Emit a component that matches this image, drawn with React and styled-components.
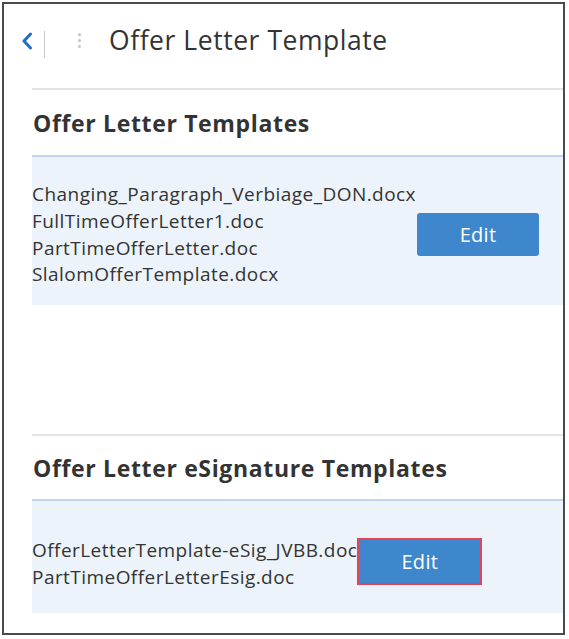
import React from "react";
import styled, { createGlobalStyle } from "styled-components";

const Global = createGlobalStyle`
  html, body { margin: 0; padding: 0; background: #fff; }
  body { font-family: "Open Sans", "Liberation Sans", sans-serif; color: #333; }
  * { box-sizing: border-box; }
`;

const Frame = styled.div`
  margin: 2px;
  width: 563px;
  height: 633px;
  border: 2px solid #4a4a4a;
  background: #fff;
  display: flex;
  flex-direction: column;
  overflow: hidden;
`;

const Header = styled.div`
  height: 76px;
  display: flex;
  align-items: center;
  padding-left: 16px;
`;

const BackButton = styled.button`
  border: none;
  background: none;
  padding: 0;
  width: 14px;
  height: 20px;
  display: flex;
  align-items: center;
  justify-content: center;
  cursor: pointer;
  margin-top: -3px;
`;

const VDivider = styled.span`
  width: 1px;
  height: 27px;
  background: #c9c9c9;
  margin-left: 10px;
  margin-top: 5px;
`;

const Dots = styled.span`
  display: flex;
  flex-direction: column;
  gap: 3px;
  margin-left: 33px;
  margin-top: -3px;
  span {
    width: 3px;
    height: 3px;
    border-radius: 50%;
    background: #c4c4c4;
  }
`;

const Title = styled.h1`
  margin: -4px 0 0 28px;
  font-size: 26.5px;
  font-weight: 400;
  color: #333;
  letter-spacing: 0.55px;
`;

const Content = styled.div`
  padding-left: 28px;
  margin-top: 8px;
`;

const Section = styled.section`
  border-top: 2px solid #e4e4e4;
  margin-top: ${(p) => p.$gap || 0}px;
`;

const SectionTitle = styled.h2`
  margin: 0;
  height: ${(p) => p.$h}px;
  display: flex;
  align-items: center;
  font-size: 23px;
  font-weight: 700;
  letter-spacing: 0.65px;
  color: #333;
  padding-left: 1px;
`;

const Panel = styled.div`
  border-top: 2px solid #bcd6ef;
  background: #edf3fa;
  height: ${(p) => p.$h}px;
  padding-top: ${(p) => p.$pt}px;
  display: flex;
  align-items: flex-start;
`;

const Row = styled.div`
  display: flex;
  align-items: center;
  gap: 1px;
`;

const FileList = styled.div`
  font-size: 19px;
  letter-spacing: 0.45px;
  line-height: 26.8px;
  color: #333;
  white-space: nowrap;
`;

const EditButton = styled.button`
  font-family: "Open Sans", "Liberation Sans", sans-serif;
  font-size: 20px;
  letter-spacing: 0.3px;
  color: #fff;
  background: #3f87cc;
  border: ${(p) => (p.$focused ? "2px solid #e3445c" : "none")};
  border-radius: ${(p) => (p.$focused ? "0" : "3px")};
  width: ${(p) => (p.$focused ? 125 : 122)}px;
  height: ${(p) => (p.$focused ? 47 : 43)}px;
  padding: 0;
  cursor: pointer;
  margin-bottom: ${(p) => (p.$focused ? 4 : 0)}px;
  margin-left: ${(p) => (p.$focused ? -1 : 0)}px;
`;

const ChevronLeft = () => (
  <svg width="12" height="18" viewBox="0 0 12 18">
    <path d="M9.5 2 L3 9 L9.5 16" fill="none" stroke="#1f6fc8" strokeWidth="3" strokeLinecap="round" strokeLinejoin="round" />
  </svg>
);

export default function App() {
  return (
    <>
      <Global />
      <Frame>
        <Header>
          <BackButton aria-label="Back">
            <ChevronLeft />
          </BackButton>
          <VDivider />
          <Dots>
            <span />
            <span />
            <span />
          </Dots>
          <Title>Offer Letter Template</Title>
        </Header>
        <Content>
          <Section>
            <SectionTitle $h={65}>Offer Letter Templates</SectionTitle>
            <Panel $h={150} $pt={24}>
              <Row>
                <FileList>
                  <div>Changing_Paragraph_Verbiage_DON.docx</div>
                  <div>FullTimeOfferLetter1.doc</div>
                  <div>PartTimeOfferLetter.doc</div>
                  <div>SlalomOfferTemplate.docx</div>
                </FileList>
                <EditButton>Edit</EditButton>
              </Row>
            </Panel>
          </Section>
          <Section $gap={129}>
            <SectionTitle $h={63}>Offer Letter eSignature Templates</SectionTitle>
            <Panel $h={114} $pt={36}>
              <Row>
                <FileList>
                  <div>OfferLetterTemplate-eSig_JVBB.doc</div>
                  <div>PartTimeOfferLetterEsig.doc</div>
                </FileList>
                <EditButton $focused>Edit</EditButton>
              </Row>
            </Panel>
          </Section>
        </Content>
      </Frame>
    </>
  );
}
